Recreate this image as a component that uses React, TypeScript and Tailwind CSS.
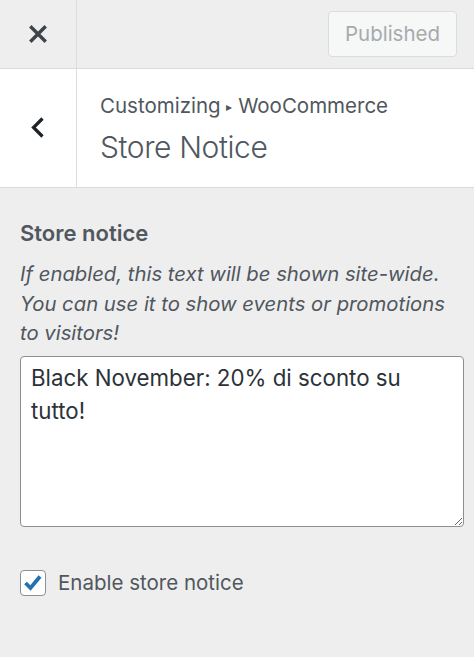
import { useState } from "react";

export default function App() {
  const [notice, setNotice] = useState("Black November: 20% di sconto su tutto!");
  const [enabled, setEnabled] = useState(true);

  return (
    <div
      className="w-[474px] h-[657px] bg-[#eeeeee] text-[#50575e] overflow-hidden flex flex-col"
      style={{ fontFamily: "Inter, 'Noto Sans', 'Liberation Sans', sans-serif" }}
    >
      <div className="h-[69px] flex border-b border-[#dcdcde] shrink-0">
        <button className="w-[77px] border-r border-[#dcdcde] flex items-center justify-center text-[#3c434a]">
          <svg width="20" height="20" viewBox="0 0 20 20">
            <path d="M3.5 3.5 L16.5 16.5 M16.5 3.5 L3.5 16.5" stroke="currentColor" strokeWidth="3.4" strokeLinecap="square" />
          </svg>
        </button>
        <div className="flex-1 flex items-start justify-end pt-[11px] pr-[17px]">
          <button className="h-[46px] w-[129px] rounded-[4px] border border-[#dcdcde] bg-[#f6f7f7] text-[#a7aaad] text-[20.5px]">
            Published
          </button>
        </div>
      </div>

      <div className="h-[119px] flex bg-white border-b border-[#dcdcde] shrink-0">
        <button className="w-[77px] border-r border-[#dcdcde] flex items-center justify-center text-[#1d2327]">
          <svg width="20" height="26" viewBox="0 0 20 26">
            <path d="M14.5 3.5 L5.5 12.5 L14.5 21.5" fill="none" stroke="currentColor" strokeWidth="3.2" />
          </svg>
        </button>
        <div className="flex-1 pl-[23px] pt-[23px]">
          <div className="text-[20.5px] leading-[28px] text-[#50575e]">
            Customizing <span className="text-[12px] align-[2px]">▸</span> WooCommerce
          </div>
          <h1 className="text-[30px] leading-[40px] font-light tracking-[-0.4px] text-[#50575e] mt-[6px]">Store Notice</h1>
        </div>
      </div>

      <div className="px-[20px] pt-[31px]">
        <label htmlFor="notice" className="block text-[22px] leading-[28px] font-semibold text-[#50575e]">
          Store notice
        </label>
        <p className="italic text-[20.3px] leading-[29.5px] text-[#50575e] mt-[12px] w-[444px]">
          If enabled, this text will be shown site-wide. You can use it to show events or promotions to visitors!
        </p>
        <textarea
          id="notice"
          value={notice}
          onChange={(e) => setNotice(e.target.value)}
          className="mt-[8px] block w-[444px] h-[171px] rounded-[4px] border border-[#8c8f94] bg-white pl-[10px] pr-[12px] py-[4px] text-[22.3px] leading-[33px] text-[#2c3338] outline-none"
        />
        <label className="mt-[42px] flex items-center gap-[12px] cursor-pointer">
          <span className="relative w-[26px] h-[26px] rounded-[4px] border border-[#8c8f94] bg-white flex items-center justify-center">
            <input
              type="checkbox"
              checked={enabled}
              onChange={(e) => setEnabled(e.target.checked)}
              className="absolute inset-0 opacity-0"
            />
            {enabled && (
              <svg width="22" height="22" viewBox="0 0 22 22">
                <path d="M3.5 11 L8.5 16 L18 4.5" fill="none" stroke="#2271b1" strokeWidth="3.8" />
              </svg>
            )}
          </span>
          <span className="text-[20.5px] leading-[28px] text-[#50575e]">Enable store notice</span>
        </label>
      </div>
    </div>
  );
}
